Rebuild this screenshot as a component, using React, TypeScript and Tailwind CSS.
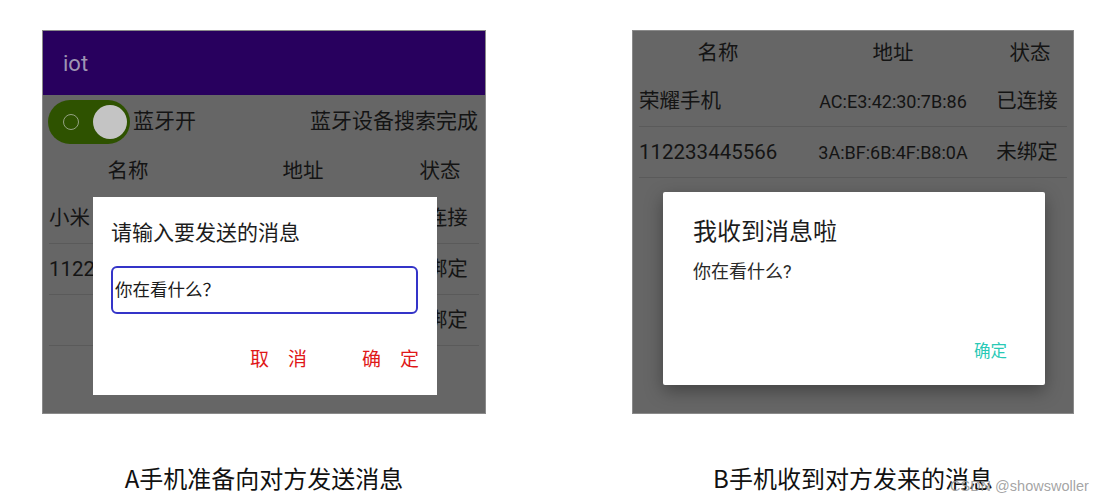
import React from 'react';

const font = "font-['Roboto','Noto_Sans_CJK_SC',sans-serif]";

type Device = { name: string; addr: string; status: string };

function DeviceTable({ rows, headerClass }: { rows: Device[]; headerClass: string }) {
  return (
    <div className="text-[20.5px] text-[#141414]">
      <div className={`grid grid-cols-[170px_180px_94px] items-center ${headerClass}`}>
        <div className="text-center">名称</div>
        <div className="text-center">地址</div>
        <div className="text-center">状态</div>
      </div>
      {rows.map((r, i) => (
        <div key={i} className="mx-[6px] grid h-[51px] grid-cols-[164px_180px_88px] items-center border-b border-[#5a5a5a]">
          <div className="whitespace-nowrap">{r.name}</div>
          <div className="whitespace-nowrap text-center text-[18px]">{r.addr}</div>
          <div className="text-center">{r.status}</div>
        </div>
      ))}
    </div>
  );
}

function Toggle() {
  return (
    <div className="flex h-[44px] w-[82px] items-center rounded-full bg-[#2e5200] px-[3px]">
      <div className="ml-[12px] h-[16px] w-[16px] rounded-full border-[1.5px] border-[#94a283]" />
      <div className="ml-auto h-[34px] w-[34px] rounded-full bg-[#c4c4c4]" />
    </div>
  );
}

function PhoneA() {
  return (
    <div className="relative h-[384px] w-[444px] overflow-hidden border border-[#8a8a8a] bg-[#666666]">
      <div className="flex h-[64px] items-center bg-[#28005e] pl-[20px] text-[22px] text-[#9e95b2]">iot</div>
      <div className="flex h-[54px] items-center pl-[5px] pr-[7px] text-[21px] text-[#141414]">
        <Toggle />
        <span className="ml-[3px]">蓝牙开</span>
        <span className="ml-auto">蓝牙设备搜索完成</span>
      </div>
      <DeviceTable
        headerClass="h-[44px]"
        rows={[
          { name: '小米', addr: '', status: '已连接' },
          { name: '112233445566', addr: '', status: '未绑定' },
          { name: '', addr: '', status: '未绑定' },
        ]}
      />

      {/* dialog */}
      <div className="absolute left-[50px] top-[166px] h-[198px] w-[344px] bg-white pl-[18px] pr-[18px] pt-[22px]">
        <div className="text-[21px] leading-[28px] text-[#1c1c1c]">请输入要发送的消息</div>
        <div className="mt-[19px] flex h-[48px] w-[307px] items-center rounded-[6px] border-2 border-[#3434c8] pl-[2px] text-[17.5px] text-[#1c1c1c]">
          你在看什么？
        </div>
        <div className="mt-[34px] flex justify-end gap-[55px] text-[19px] leading-[24px] text-[#e01818]">
          <span>取　消</span>
          <span>确　定</span>
        </div>
      </div>
    </div>
  );
}

function PhoneB() {
  return (
    <div className="relative h-[384px] w-[442px] overflow-hidden border border-[#8a8a8a] bg-[#666666]">
      <DeviceTable
        headerClass="h-[45px]"
        rows={[
          { name: '荣耀手机', addr: 'AC:E3:42:30:7B:86', status: '已连接' },
          { name: '112233445566', addr: '3A:BF:6B:4F:B8:0A', status: '未绑定' },
        ]}
      />

      {/* dialog */}
      <div className="absolute left-[30px] top-[161px] h-[193px] w-[382px] rounded-[2px] bg-white pl-[30px] pr-[38px] pt-[25px] shadow-[0_6px_18px_rgba(0,0,0,0.35)]">
        <div className="text-[24px] leading-[30px] text-[#1c1c1c]">我收到消息啦</div>
        <div className="mt-[12px] text-[18px] leading-[26px] text-[#2a2a2a]">你在看什么?</div>
        <div className="mt-[55px] flex justify-end text-[16.5px] leading-[24px] text-[#29c9b6]">确定</div>
      </div>
    </div>
  );
}

export default function App() {
  return (
    <div className={`relative h-[500px] w-[1103px] overflow-hidden bg-white pt-[30px] ${font}`}>
      <div className="flex">
        <div className="ml-[42px] w-[444px]">
          <PhoneA />
        </div>
        <div className="ml-[146px] w-[442px]">
          <PhoneB />
        </div>
      </div>
      <div className="mt-[49px] flex font-['Noto_Sans_CJK_SC',sans-serif] text-[24px] leading-[30px] text-[#111]">
        <div className="ml-[42px] w-[444px] text-center">A手机准备向对方发送消息</div>
        <div className="ml-[146px] w-[442px] text-center">B手机收到对方发来的消息</div>
      </div>
      <div className="absolute left-[950px] top-[476px] font-['Liberation_Sans',sans-serif] text-[14.5px] leading-[20px] text-[#9a9a9a]/90">
        CSDN @showswoller
      </div>
    </div>
  );
}
